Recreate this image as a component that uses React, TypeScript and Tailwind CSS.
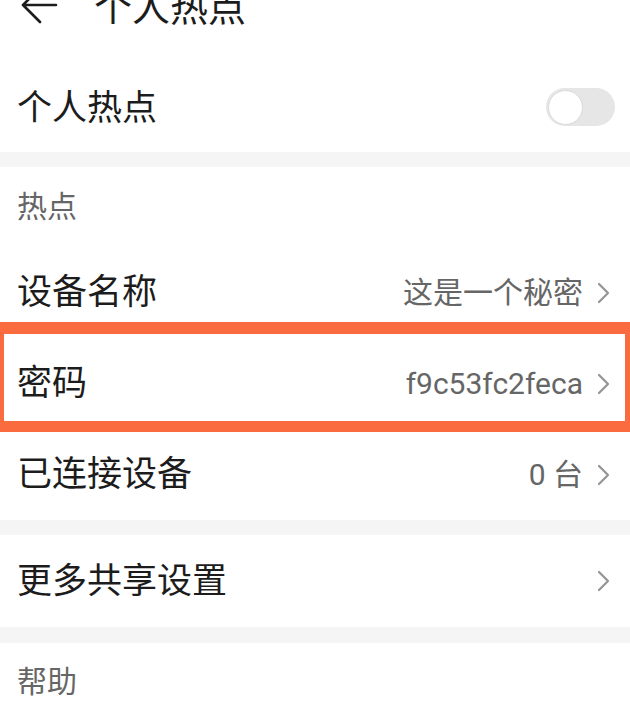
import React from "react";

function Chevron() {
  return (
    <svg width="13" height="22" viewBox="0 0 13 22" fill="none" className="shrink-0">
      <path d="M2 2 L11 11 L2 20" stroke="#949494" strokeWidth="2.2" strokeLinecap="round" strokeLinejoin="round" />
    </svg>
  );
}

function Row({ label, value, h = "h-[91px]" }: { label: string; value?: string; h?: string }) {
  return (
    <div className={`${h} flex items-center pl-[17px] pr-[20px]`}>
      <span className="flex-1 text-[35px] text-[#1c1c1c]">{label}</span>
      {value && <span className="text-[30px] text-[#666] mr-[14px]">{value}</span>}
      <Chevron />
    </div>
  );
}

function Band({ h = "h-[15px]" }: { h?: string }) {
  return <div className={`${h} bg-[#f5f5f5]`} />;
}

export default function App() {
  return (
    <div className="w-[630px] h-[720px] overflow-hidden bg-white font-['Roboto','Noto_Sans_CJK_SC',sans-serif] leading-none">
      {/* header, cut off at the top like the screenshot */}
      <div className="h-[62px] flex items-start pl-[20px]">
        <svg width="38" height="40" viewBox="0 0 38 40" fill="none" className="-mt-[15px] shrink-0">
          <path d="M36 20 H3 M20 3 L3 20 L20 37" stroke="#1c1c1c" strokeWidth="2.6" strokeLinecap="round" strokeLinejoin="round" />
        </svg>
        <span className="ml-[36px] -mt-[12px] text-[38px] leading-[40px] text-[#1c1c1c]">个人热点</span>
      </div>

      <div className="h-[90px] flex items-center pl-[17px] pr-[15px]">
        <span className="flex-1 text-[35px] text-[#1c1c1c] mt-[3px]">个人热点</span>
        <div className="w-[69px] h-[38px] rounded-full bg-[#e6e6e6] flex items-center pl-[2px]">
          <div className="w-[35px] h-[35px] rounded-full bg-white border-[1.5px] border-[#d9d9d9]" />
        </div>
      </div>

      <Band />

      <div className="h-[80px] flex items-center pl-[17px]">
        <span className="text-[30px] text-[#666]">热点</span>
      </div>

      <Row label="设备名称" value="这是一个秘密" />

      <div className="relative">
        <Row label="密码" value="f9c53fc2feca" />
        <div className="absolute left-0 right-0 top-[-16px] bottom-[-3px] border-t-[12px] border-b-[11px] border-l-[4px] border-r-[5px] border-[#fa6b40]" />
      </div>

      <Row label="已连接设备" value="0 台" />

      <Band />

      <Row label="更多共享设置" h="h-[92px]" />

      <Band h="h-[16px]" />

      <div className="h-[77px] flex items-center pl-[17px]">
        <span className="text-[30px] text-[#666]">帮助</span>
      </div>
    </div>
  );
}
